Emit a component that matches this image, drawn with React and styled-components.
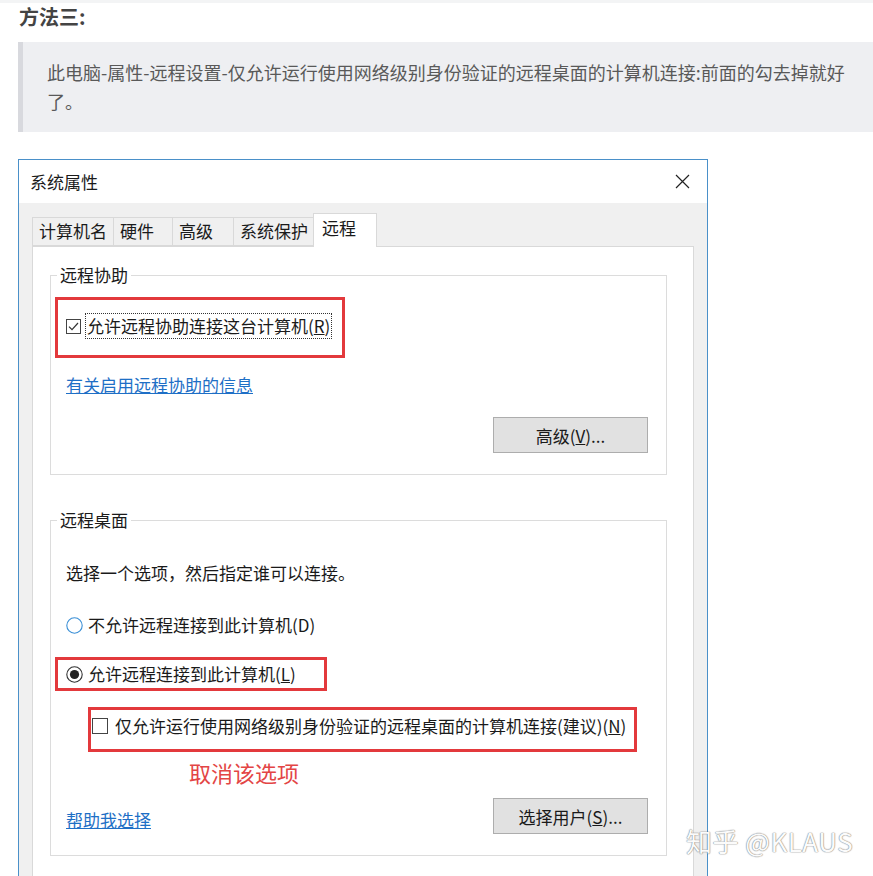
import styled, { createGlobalStyle } from "styled-components"

const GlobalStyle = createGlobalStyle`
  html, body {
    margin: 0;
    padding: 0;
    background: #fff;
    overflow: hidden;
  }
  body {
    font-family: "Noto Sans CJK SC", "Noto Sans", sans-serif;
    color: #1a1a1a;
  }
`

const Page = styled.div`
  position: relative;
  width: 873px;
  height: 876px;
  overflow: hidden;
`

const TopBand = styled.div`
  height: 3px;
  background: #f3f4f5;
`

const Heading = styled.h3`
  margin: 0 0 0 19px;
  font-size: 20px;
  line-height: 28px;
  font-weight: 700;
  color: #444;
`

const Quote = styled.blockquote`
  margin: 11px 0 0 18px;
  padding: 16px 21px 16px 24px;
  background: #eeeff2;
  border-left: 5px solid #d8d9de;
  font-size: 18px;
  line-height: 29px;
  color: #595959;
`

const Dialog = styled.div`
  margin: 27px 0 0 18px;
  width: 690px;
  box-sizing: border-box;
  border: 1px solid #4a90c9;
  border-bottom: none;
  background: #f0f0f0;
`

const TitleBar = styled.div`
  height: 43px;
  background: #fff;
  display: flex;
  align-items: center;
  justify-content: space-between;
  padding: 0 17px 0 11px;
  font-size: 17px;
`

const TabStrip = styled.div`
  display: flex;
  align-items: flex-end;
  height: 43px;
  box-sizing: border-box;
  padding: 10px 13px 0;
`

const Tab = styled.div`
  box-sizing: border-box;
  width: ${p => p.$w}px;
  height: ${p => (p.$active ? 34 : 29)}px;
  margin-left: -1px;
  margin-bottom: ${p => (p.$active ? -1 : 0)}px;
  padding-left: ${p => (p.$active ? 8 : 6)}px;
  border: 1px solid #d9d9d9;
  border-bottom: ${p => (p.$active ? "none" : "1px solid #d9d9d9")};
  background: ${p => (p.$active ? "#fff" : "#f0f0f0")};
  position: relative;
  z-index: ${p => (p.$active ? 1 : 0)};
  font-size: 17px;
  line-height: ${p => (p.$active ? 28 : 25)}px;
  white-space: nowrap;

  &:first-child {
    margin-left: 0;
  }
`

const Panel = styled.div`
  margin: 0 13px;
  background: #fff;
  border: 1px solid #d9d9d9;
  padding: 18px 26px 40px 17px;
`

const Group = styled.fieldset`
  margin: 0;
  min-width: 0;
  border: 1px solid #dcdcdc;
  padding: 0 18px 21px 15px;

  & + & {
    margin-top: 35px;
  }
`

const Legend = styled.legend`
  padding: 0 3px;
  margin-left: -9px;
  font-size: 17px;
  line-height: 20px;
`

const Annot = styled.div`
  box-sizing: border-box;
  border: 3px solid #e3393c;
  width: ${p => p.$w}px;
  height: ${p => p.$h}px;
  margin: ${p => p.$m};
  padding: ${p => p.$p};
  display: flex;
  align-items: ${p => p.$align || "center"};
`

const Option = styled.div`
  display: flex;
  align-items: center;
  gap: ${p => p.$gap || 7}px;
  height: 24px;
  font-size: 17px;
  line-height: 24px;
  margin-top: ${p => p.$mt || 0}px;
  white-space: nowrap;

  svg {
    flex: none;
  }
`

const Focus = styled.span`
  outline: 1px dotted #333;
  outline-offset: 0;
  padding: 0 1px;
  margin-left: -2px;
`

const Text = styled.div`
  font-size: 17px;
  line-height: 24px;
  margin-top: ${p => p.$mt || 0}px;
`

const Link = styled.a`
  display: inline-block;
  color: #1e6fc6;
  text-decoration: underline;
  font-size: 17px;
  line-height: 24px;
  margin-top: ${p => p.$mt || 0}px;
`

const ButtonRow = styled.div`
  display: flex;
  justify-content: ${p => p.$between ? "space-between" : "flex-end"};
  align-items: flex-end;
  margin-top: ${p => p.$mt}px;

  ${Link} {
    margin-bottom: 2px;
  }
`

const Button = styled.button`
  width: 155px;
  height: 36px;
  box-sizing: border-box;
  background: #e1e1e1;
  border: 1px solid #adadad;
  font-family: inherit;
  font-size: 17px;
  color: #1a1a1a;
  padding: 0;
`

const Note = styled.div`
  margin: 6px 0 0 123px;
  font-size: 22px;
  line-height: 28px;
  color: #e34545;
`

const Watermark = styled.div`
  position: absolute;
  left: 686px;
  top: 824px;
  font-size: 26px;
  line-height: 34px;
  color: #fbfbfb;
  letter-spacing: 0.5px;
  text-shadow: 0 0 1px #888, 0 0 1px #888, 0 0 2px rgba(0,0,0,0.2);
  white-space: nowrap;
`

const Checkbox = ({ checked, size = 15 }) => (
  <svg width={size} height={size} viewBox={`0 0 ${size} ${size}`}>
    <rect x="0.5" y="0.5" width={size - 1} height={size - 1} fill="#fff" stroke="#444" />
    {checked && <path d="M3 7.6 L6 10.6 L12 4" fill="none" stroke="#333" strokeWidth="1.2" />}
  </svg>
)

const Radio = ({ checked }) => (
  <svg width="17" height="17" viewBox="0 0 17 17">
    <circle cx="8.5" cy="8.5" r="7.7" fill="#fff" stroke={checked ? "#333" : "#3a8fd6"} strokeWidth="1.1" />
    {checked && <circle cx="8.5" cy="8.5" r="4.6" fill="#222" />}
  </svg>
)

const CloseIcon = () => (
  <svg width="15" height="15" viewBox="0 0 15 15">
    <path d="M1 1 L14 14 M14 1 L1 14" stroke="#222" strokeWidth="1.2" />
  </svg>
)

const tabs = [
  { name: "计算机名", w: 82 },
  { name: "硬件", w: 60 },
  { name: "高级", w: 62 },
  { name: "系统保护", w: 81 },
  { name: "远程", w: 64, active: true },
]

export default function App() {
  return (
    <Page>
      <GlobalStyle />
      <TopBand />
      <Heading>方法三:</Heading>
      <Quote>
        此电脑-属性-远程设置-仅允许运行使用网络级别身份验证的远程桌面的计算机连接:前面的勾去掉就好了。
      </Quote>

      <Dialog>
        <TitleBar>
          <span>系统属性</span>
          <CloseIcon />
        </TitleBar>
        <TabStrip>
          {tabs.map(t => (
            <Tab key={t.name} $w={t.w} $active={t.active}>{t.name}</Tab>
          ))}
        </TabStrip>
        <Panel>
          <Group>
            <Legend>远程协助</Legend>
            <Annot $w={290} $h={61} $m="12px 0 0 -11px" $p="14px 0 0 8px" $align="flex-start">
              <Option>
                <Checkbox checked />
                <Focus>允许远程协助连接这台计算机(<u>R</u>)</Focus>
              </Option>
            </Annot>
            <Link $mt={15}>有关启用远程协助的信息</Link>
            <ButtonRow $mt={20}>
              <Button>高级(<u>V</u>)...</Button>
            </ButtonRow>
          </Group>

          <Group>
            <Legend>远程桌面</Legend>
            <Text $mt={31}>选择一个选项，然后指定谁可以连接。</Text>
            <Option $mt={28} $gap={5}>
              <Radio />
              <span>不允许远程连接到此计算机(D)</span>
            </Option>
            <Annot $w={272} $h={34} $m="20px 0 0 -11px" $p="0 0 0 8px">
              <Option $gap={5}>
                <Radio checked />
                <span>允许远程连接到此计算机(<u>L</u>)</span>
              </Option>
            </Annot>
            <Annot $w={549} $h={45} $m="16px 0 0 22px" $p="4px 0 0 1px" $align="flex-start">
              <Option>
                <Checkbox size={16} />
                <span>仅允许运行使用网络级别身份验证的远程桌面的计算机连接(建议)(<u>N</u>)</span>
              </Option>
            </Annot>
            <Note>取消该选项</Note>
            <ButtonRow $mt={12} $between>
              <Link>帮助我选择</Link>
              <Button>选择用户(<u>S</u>)...</Button>
            </ButtonRow>
          </Group>
        </Panel>
      </Dialog>

      <Watermark>知乎 @KLAUS</Watermark>
    </Page>
  )
}
